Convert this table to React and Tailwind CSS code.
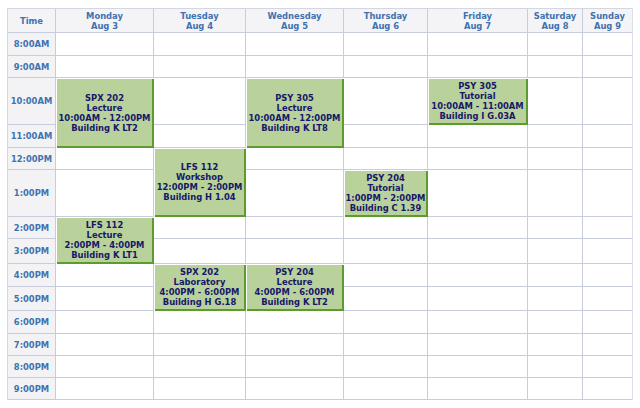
const days = [
  { name: 'Monday', date: 'Aug 3' },
  { name: 'Tuesday', date: 'Aug 4' },
  { name: 'Wednesday', date: 'Aug 5' },
  { name: 'Thursday', date: 'Aug 6' },
  { name: 'Friday', date: 'Aug 7' },
  { name: 'Saturday', date: 'Aug 8' },
  { name: 'Sunday', date: 'Aug 9' },
];

const times = [
  '8:00AM', '9:00AM', '10:00AM', '11:00AM', '12:00PM', '1:00PM', '2:00PM',
  '3:00PM', '4:00PM', '5:00PM', '6:00PM', '7:00PM', '8:00PM', '9:00PM',
];

// day index, start row index (into times), number of rows
const events = [
  { day: 0, row: 2, span: 2, lines: ['SPX 202', 'Lecture', '10:00AM - 12:00PM', 'Building K LT2'] },
  { day: 2, row: 2, span: 2, lines: ['PSY 305', 'Lecture', '10:00AM - 12:00PM', 'Building K LT8'] },
  { day: 4, row: 2, span: 1, lines: ['PSY 305', 'Tutorial', '10:00AM - 11:00AM', 'Building I G.03A'] },
  { day: 1, row: 4, span: 2, lines: ['LFS 112', 'Workshop', '12:00PM - 2:00PM', 'Building H 1.04'] },
  { day: 3, row: 5, span: 1, lines: ['PSY 204', 'Tutorial', '1:00PM - 2:00PM', 'Building C 1.39'] },
  { day: 0, row: 6, span: 2, lines: ['LFS 112', 'Lecture', '2:00PM - 4:00PM', 'Building K LT1'] },
  { day: 1, row: 8, span: 2, lines: ['SPX 202', 'Laboratory', '4:00PM - 6:00PM', 'Building H G.18'] },
  { day: 2, row: 8, span: 2, lines: ['PSY 204', 'Lecture', '4:00PM - 6:00PM', 'Building K LT2'] },
];

const spanClass = { 1: 'row-span-1', 2: 'row-span-2' };

function EventCell({ ev }) {
  return (
    <div className={`${spanClass[ev.span]} pl-px pt-px bg-white`}>
      <div className="flex h-full w-full flex-col items-center justify-center border-r-2 border-b-2 border-[#5c9c2c] bg-[#b9d19a] text-center text-[#17176a]">
        {ev.lines.map((l) => (
          <div key={l} className="whitespace-nowrap">{l}</div>
        ))}
      </div>
    </div>
  );
}

export default function App() {
  const cells = [];

  cells.push(
    <div key="h-time" className="flex items-center justify-center border-r border-b border-[#c8cddd] bg-[#f4f4f6] text-[#4072b0]">
      Time
    </div>
  );
  days.forEach((d, i) => {
    cells.push(
      <div
        key={'h' + i}
        className={`flex flex-col items-center justify-center border-r border-b border-[#c8cddd] bg-[#f4f4f6] text-center text-[#4072b0] ${i === 6 ? 'border-r-[#dde0ea]' : ''}`}
      >
        <div>{d.name}</div>
        <div>{d.date}</div>
      </div>
    );
  });

  times.forEach((t, r) => {
    cells.push(
      <div key={'t' + r} className="flex items-center justify-center border-r border-b border-[#c8cddd] bg-[#f3f3f5] text-[#4072b0]">
        {t}
      </div>
    );
    days.forEach((d, di) => {
      const start = events.find((e) => e.day === di && e.row === r);
      if (start) {
        cells.push(<EventCell key={`e${r}-${di}`} ev={start} />);
        return;
      }
      const covered = events.find((e) => e.day === di && r > e.row && r < e.row + e.span);
      if (covered) return;
      cells.push(
        <div
          key={`c${r}-${di}`}
          className={`border-r border-b border-[#c8cddd] bg-white ${di === 6 ? 'border-r-[#dde0ea]' : ''}`}
        />
      );
    });
  });

  return (
    <div className="min-h-[408px] w-[640px] bg-white pt-[8px] pl-[7px]">
      <div
        className="grid w-[626px] grid-cols-[48px_98px_92px_98px_84px_100px_55px_50px] grid-rows-[24px_23px_22px_47px_23px_22px_47px_22px_25px_23px_24px_23px_22px_22px_22px] border-t border-l border-[#d3d7e3] text-[8.4px] font-bold leading-[10px]"
        style={{ fontFamily: '"DejaVu Sans", Verdana, sans-serif' }}
      >
        {cells}
      </div>
    </div>
  );
}
